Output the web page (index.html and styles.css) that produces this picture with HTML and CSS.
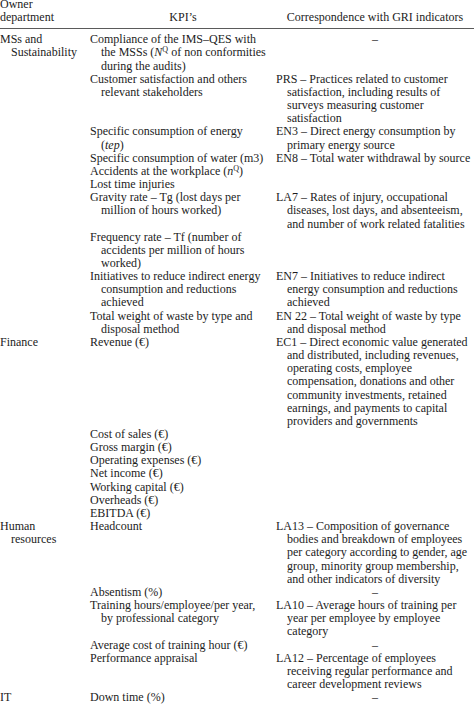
FILE: index.html
```html
<!DOCTYPE html>
<html>
<head>
<meta charset="utf-8">
<link rel="stylesheet" href="styles.css">
</head>
<body>
<table class="kpi">
<colgroup><col class="c1"><col class="c2"><col class="c3"></colgroup>
<thead>
<tr>
<th class="h1">Owner<br>department</th>
<th class="hc">KPI’s</th>
<th class="hc">Correspondence with GRI indicators</th>
</tr>
</thead>
<tbody>
<tr class="first"><td class="hang">MSs and<br>Sustainability</td><td class="hang">Compliance of the IMS–QES with<br>the MSSs (<i>N</i><sup>Q</sup> of non conformities<br>during the audits)</td><td class="dash">–</td></tr>
<tr><td></td><td class="hang">Customer satisfaction and others<br>relevant stakeholders</td><td class="hang">PRS – Practices related to customer<br>satisfaction, including results of<br>surveys measuring customer<br>satisfaction</td></tr>
<tr><td></td><td class="hang">Specific consumption of energy<br>(<i>tep</i>)</td><td class="hang">EN3 – Direct energy consumption by<br>primary energy source</td></tr>
<tr><td></td><td class="hang">Specific consumption of water (m3)</td><td class="hang">EN8 – Total water withdrawal by source</td></tr>
<tr><td></td><td class="hang">Accidents at the workplace (<i>n</i><sup>Q</sup>)</td><td></td></tr>
<tr><td></td><td class="hang">Lost time injuries</td><td></td></tr>
<tr><td></td><td class="hang">Gravity rate – Tg (lost days per<br>million of hours worked)</td><td class="hang">LA7 – Rates of injury, occupational<br>diseases, lost days, and absenteeism,<br>and number of work related fatalities</td></tr>
<tr><td></td><td class="hang">Frequency rate – Tf (number of<br>accidents per million of hours<br>worked)</td><td></td></tr>
<tr><td></td><td class="hang">Initiatives to reduce indirect energy<br>consumption and reductions<br>achieved</td><td class="hang">EN7 – Initiatives to reduce indirect<br>energy consumption and reductions<br>achieved</td></tr>
<tr><td></td><td class="hang">Total weight of waste by type and<br>disposal method</td><td class="hang">EN 22 – Total weight of waste by type<br>and disposal method</td></tr>
<tr><td class="hang">Finance</td><td class="hang">Revenue (€)</td><td class="hang">EC1 – Direct economic value generated<br>and distributed, including revenues,<br>operating costs, employee<br>compensation, donations and other<br>community investments, retained<br>earnings, and payments to capital<br>providers and governments</td></tr>
<tr><td></td><td class="hang">Cost of sales (€)</td><td></td></tr>
<tr><td></td><td class="hang">Gross margin (€)</td><td></td></tr>
<tr><td></td><td class="hang">Operating expenses (€)</td><td></td></tr>
<tr><td></td><td class="hang">Net income (€)</td><td></td></tr>
<tr><td></td><td class="hang">Working capital (€)</td><td></td></tr>
<tr><td></td><td class="hang">Overheads (€)</td><td></td></tr>
<tr><td></td><td class="hang">EBITDA (€)</td><td></td></tr>
<tr><td class="hang">Human<br>resources</td><td class="hang">Headcount</td><td class="hang">LA13 – Composition of governance<br>bodies and breakdown of employees<br>per category according to gender, age<br>group, minority group membership,<br>and other indicators of diversity</td></tr>
<tr><td></td><td class="hang">Absentism (%)</td><td class="dash">–</td></tr>
<tr><td></td><td class="hang">Training hours/employee/per year,<br>by professional category</td><td class="hang">LA10 – Average hours of training per<br>year per employee by employee<br>category</td></tr>
<tr><td></td><td class="hang">Average cost of training hour (€)</td><td class="dash">–</td></tr>
<tr><td></td><td class="hang">Performance appraisal</td><td class="hang">LA12 – Percentage of employees<br>receiving regular performance and<br>career development reviews</td></tr>
<tr><td class="hang">IT</td><td class="hang">Down time (%)</td><td class="dash">–</td></tr>
</tbody>
</table>
</body>
</html>
```

FILE: styles.css
```css
html, body {
  margin: 0;
  padding: 0;
  background: #ffffff;
}
body {
  font-family: "Liberation Serif", "Times New Roman", serif;
  font-size: 12px;
  line-height: 13.15px;
  color: #1c1c1c;
}
.kpi {
  border-collapse: collapse;
  width: 474px;
  margin-top: -2px;
  table-layout: fixed;
}
.c1 { width: 90px; }
.c2 { width: 186px; }
.c3 { width: 198px; }
.kpi th {
  font-weight: normal;
  padding: 0 0 4px 0;
  border-bottom: 1px solid #5a5a5a;
  vertical-align: bottom;
}
.kpi th.h1 {
  text-align: left;
}
.kpi th.hc {
  text-align: center;
}
.kpi td {
  padding: 0;
  vertical-align: top;
  text-align: left;
}
.kpi tr.first td {
  padding-top: 4px;
}
.hang {
  padding-left: 11px !important;
  text-indent: -11px;
}
.dash {
  text-align: center !important;
}
sup {
  font-size: 8px;
  line-height: 0;
  vertical-align: 4px;
}
i { font-style: italic; }
```
